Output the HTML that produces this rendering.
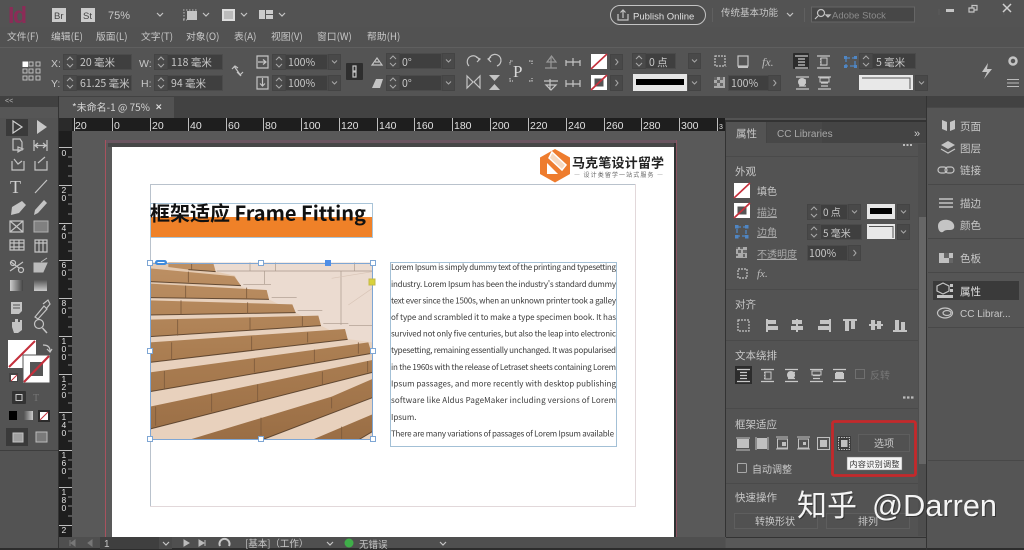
<!DOCTYPE html>
<html lang="zh"><head><meta charset="utf-8"><title>InDesign</title>
<style>
html,body{margin:0;padding:0;background:#535353;width:1024px;height:550px;overflow:hidden}
svg{display:block;position:absolute;left:0;top:0;filter:blur(.35px)}
text{font-family:"Liberation Sans","Noto Sans CJK SC",sans-serif;fill:#c8c8c8;font-size:10.5px}
.c{font-family:"Noto Sans CJK SC","Liberation Sans",sans-serif}
.m{font-family:"Noto Sans CJK SC","Liberation Sans",sans-serif;font-size:9.8px}
.l{font-family:"Noto Sans CJK SC","Liberation Sans",sans-serif;font-size:8px;fill:#3a3a3a}
.r{font-size:10.5px;fill:#e0e0e0}
.v{font-size:8.500px;fill:#e0e0e0}
.ic{fill:none;stroke:#c4c4c4;stroke-width:1.2}
.if{fill:#c4c4c4}
</style></head><body>
<svg width="1024" height="550" viewBox="0 0 1024 550" xmlns="http://www.w3.org/2000/svg">
<defs>
<g id="sp"><rect width="13" height="15" fill="#494949" stroke="#444"/><path d="M3.5 5.5 6.5 2.5 9.5 5.5M3.5 9.5 6.5 12.5 9.5 9.5" fill="none" stroke="#a8a8a8"/></g>
<g id="dd"><rect width="12" height="15" fill="#494949" stroke="#444"/><path d="M3.5 6 6 8.5 8.5 6" fill="none" stroke="#a8a8a8"/></g>
<g id="ar"><rect width="12" height="15" fill="#494949" stroke="#444"/><path d="M5 4.5 7.5 7.5 5 10.5" fill="none" stroke="#a8a8a8"/></g>
<g id="none"><rect width="16" height="15" fill="#fff"/><path d="M0 15 16 0" stroke="#c4303c" stroke-width="1.6"/></g>
<g id="nonest"><rect width="16" height="15" fill="#fff"/><rect x="3.5" y="3.5" width="9" height="8" fill="#555"/><path d="M0 15 16 0" stroke="#c4303c" stroke-width="1.8"/></g>
<g id="wrap"><path d="M0 1H13M0 13H13M3 4H10M3 7H10M3 10H10" stroke="#c8c8c8" stroke-width="1.2" fill="none"/></g>
<linearGradient id="g1" x1="0" x2="1"><stop offset="0" stop-color="#ccc"/><stop offset="1" stop-color="#444"/></linearGradient>
<linearGradient id="g2" x1="0" x2="1"><stop offset="0" stop-color="#555"/><stop offset="1" stop-color="#ccc"/></linearGradient>
<linearGradient id="g3" x1="0" x2="0" y1="0" y2="1"><stop offset="0" stop-color="#555"/><stop offset="1" stop-color="#ccc"/></linearGradient>
<linearGradient id="rs" gradientUnits="userSpaceOnUse" x1="0" x2="0" y1="22" y2="555"><stop offset="0" stop-color="#bd9064"/><stop offset=".5" stop-color="#ab7e52"/><stop offset="1" stop-color="#9a6e45"/></linearGradient>
<clipPath id="cp"><rect x="15" y="22" width="667" height="533"/></clipPath>
</defs>

<!-- base -->
<rect width="1024" height="550" fill="#535353"/>
<rect y="27" width="1024" height="20" fill="#525252"/>
<rect y="47" width="1024" height="49" fill="#545454"/>
<path d="M0 47.5H1024" stroke="#5f5f5f"/>
<rect y="96" width="1024" height="22" fill="#424242"/>
<rect x="0" y="96" width="58" height="454" fill="#535353"/>
<rect x="0" y="96" width="58" height="11" fill="#414141"/>
<rect x="0" y="107" width="58" height="11" fill="#565656"/>
<path d="M58.5 96V550" stroke="#333"/>
<text x="5" y="103" style="font-size:7px;fill:#bbb">&lt;&lt;</text>

<!-- top bar -->
<text x="8" y="23" style="font-size:23px;fill:#8b2c57;font-weight:bold" textLength="19">Id</text>
<rect x="52" y="8" width="14" height="14" fill="#cbcbcb"/><text x="54" y="19" style="font-size:9.5px;fill:#444">Br</text>
<rect x="81" y="8" width="14" height="14" fill="#cbcbcb"/><text x="83" y="19" style="font-size:9.5px;fill:#444">St</text>
<text x="108" y="19" style="font-size:11px">75%</text>
<path d="M157 13 160 16 163 13M203 13 206 16 209 13M241 13 244 16 247 13M279 13 282 16 285 13" class="ic" stroke-width="1"/>
<rect x="187" y="11" width="10" height="9" class="if"/><path d="M183 10H197M183 20H187M184 12V20" stroke="#bbb" stroke-dasharray="1.5 1.5" fill="none"/>
<rect x="223" y="10" width="11" height="10" fill="#bbb" stroke="#ddd" stroke-width="2"/>
<rect x="259" y="10" width="6" height="9" fill="#ccc"/><rect x="266" y="10" width="7" height="4" fill="#ccc"/><rect x="266" y="15" width="7" height="4" fill="#ccc"/>
<rect x="610.5" y="5.5" width="95" height="19" rx="9.5" fill="#4c4c4c" stroke="#c4c4c4"/>
<path d="M618 14V20H628V14M623 18V10M620.5 12.5 623 10 625.5 12.5" class="ic"/>
<text x="633" y="19.5" style="font-size:9.5px;fill:#e0e0e0">Publish Online</text>
<path d="M712.5 8V22" stroke="#606060"/>
<text x="721" y="16" class="c" style="font-size:9.5px">传统基本功能</text>
<path d="M787 13 790 16 793 13" class="ic" stroke-width="1.4"/>
<path d="M804.5 8V22" stroke="#606060"/>
<rect x="811.5" y="7" width="103" height="15" fill="#474747" stroke="#666"/>
<circle cx="821" cy="13" r="3.5" class="ic"/><path d="M818 16 815 19M826 15H830L828 17Z" class="ic"/>
<text x="832" y="18.5" style="font-size:9.5px;fill:#8b8b8b">Adobe Stock</text>
<path d="M939 9V15M972 3V15M1004 3V15" stroke="#5b5b5b"/>
<rect x="946" y="9" width="8" height="3" fill="#c4c4c4"/>
<path d="M969 8H974V12H969ZM972 8V5.5H977V10H974" class="ic"/>
<path d="M1003 4 1011 12M1011 4 1003 12" stroke="#cfcfcf" stroke-width="1.5"/>

<!-- menu -->
<g><text x="7" y="40" class="m">文件(F)</text><text x="51" y="40" class="m">编辑(E)</text><text x="96" y="40" class="m">版面(L)</text><text x="141" y="40" class="m">文字(T)</text><text x="186" y="40" class="m">对象(O)</text><text x="234" y="40" class="m">表(A)</text><text x="271" y="40" class="m">视图(V)</text><text x="317" y="40" class="m">窗口(W)</text><text x="367" y="40" class="m">帮助(H)</text></g>

<!-- control bar -->
<g fill="none" stroke="#bdbdbd"><rect x="23" y="62" width="4.5" height="4.5" fill="#fff" stroke="#fff"/><rect x="29" y="62" width="4" height="4"/><rect x="36" y="62" width="4" height="4"/><rect x="23" y="69" width="4" height="4"/><rect x="29" y="69" width="4" height="4"/><rect x="36" y="69" width="4" height="4"/><rect x="23" y="76" width="4" height="4"/><rect x="29" y="76" width="4" height="4"/><rect x="36" y="76" width="4" height="4"/></g>
<g style="font-size:10.5px"><text x="51" y="67">X:</text><text x="51" y="87">Y:</text><text x="139" y="67">W:</text><text x="141" y="87">H:</text></g>
<g fill="#3f3f3f" stroke="#4b4b4b">
<rect x="76.500" y="54.500" width="55" height="15"/><rect x="76.500" y="75.500" width="55" height="15"/>
<rect x="167.500" y="54.500" width="55" height="15"/><rect x="167.500" y="75.500" width="55" height="15"/>
<rect x="285.500" y="54.500" width="42" height="15"/><rect x="285.500" y="75.500" width="42" height="15"/>
<rect x="399.500" y="53.500" width="42" height="15"/><rect x="399.500" y="75.500" width="42" height="15"/>
<rect x="645.500" y="53.500" width="30" height="15"/>
<rect x="728.500" y="75.500" width="40" height="15"/>
<rect x="872.500" y="53.500" width="43" height="15"/>
</g>
<use href="#sp" x="63.500" y="54.500"/><use href="#sp" x="63.500" y="75.500"/><use href="#sp" x="154.500" y="54.500"/><use href="#sp" x="154.500" y="75.500"/>
<use href="#sp" x="272.500" y="54.500"/><use href="#sp" x="272.500" y="75.500"/><use href="#dd" x="328.500" y="54.500"/><use href="#dd" x="328.500" y="75.500"/>
<use href="#sp" x="386.500" y="53.500"/><use href="#sp" x="386.500" y="75.500"/><use href="#dd" x="442.500" y="53.500"/><use href="#dd" x="442.500" y="75.500"/>
<use href="#sp" x="632.500" y="53.500"/><use href="#dd" x="688.500" y="53.500"/>
<use href="#ar" x="768.500" y="75.500"/>
<use href="#sp" x="859.500" y="53.500"/><use href="#dd" x="915.500" y="75.500"/>
<g>
<text x="80" y="66" class="c">20 毫米</text><text x="80" y="87" class="c">61.25 毫米</text><text x="171" y="66" class="c">118 毫米</text><text x="171" y="87" class="c">94 毫米</text>
<text x="288" y="66" class="c">100%</text><text x="288" y="87" class="c">100%</text><text x="402" y="66" class="c">0°</text><text x="402" y="87" class="c">0°</text>
<text x="649" y="66" class="c">0 点</text><text x="731" y="87" class="c">100%</text><text x="876" y="66" class="c">5 毫米</text></g>
<path d="M234 66 241 76M232 69 235 66 238 68M237 72 240 75 243 72" class="ic" stroke-width="1.5"/>
<path d="M257 56H268V68H257ZM258 62H266M263 59.500 266 62 263 64.500" class="ic"/>
<path d="M257 77H268V89H257ZM262.500 78V86M260 83.500 262.500 86 265 83.500" class="ic"/>
<rect x="346" y="63" width="17" height="17" fill="#2e2e2e" rx="1"/>
<path d="M353 66H356V71H353ZM353 72H356V77H353Z" class="ic"/>
<path d="M372 65H382L377 58ZM375 62H379" class="ic"/><path d="M372 88H380L383 79H376Z" class="if"/>
<path d="M469 66A6 6 0 1 1 479 60M476 57 480 59 477 62M497 66A6 6 0 1 0 489 60M491 57 488 59 491 62" class="ic"/>
<path d="M467 76V88L473 82ZM480 76V88L474 82Z" class="ic"/><path d="M489 75 500 75 494.500 81ZM489 90H500L494.500 84Z" class="if"/>
<text x="513" y="77" style="font-family:'Liberation Serif',serif;font-size:17px;fill:#d8d8d8">P</text>
<path d="M510 61H513M510 62V65M529 61H532V64M510 78V81H513M529 81H532V78" class="ic" stroke-dasharray="1.5 1"/>
<path d="M551 57V68M547 62H556L551.500 56ZM545 68H557" class="ic" opacity=".6"/>
<path d="M566 62H580M566 60V66M573 58V66M580 60V66" class="ic"/>
<path d="M550 79V90M544 81H558M546 85H556L551 90Z" class="ic"/><path d="M566 84H580M566 80V87M573 80V87M580 80V87" class="ic"/>
<use href="#none" x="591" y="54"/><use href="#nonest" x="591" y="75"/>
<use href="#ar" x="610.500" y="54.500"/><use href="#ar" x="610.500" y="75.500"/>
<rect x="633" y="74" width="54" height="17" fill="#e6e6e6"/><rect x="636" y="79" width="48" height="6" fill="#000"/>
<use href="#dd" x="688.500" y="75.500"/>
<rect x="715" y="56" width="10" height="10" class="ic" stroke-dasharray="2 1"/><text x="725" y="67" style="font-size:7px">.</text>
<rect x="738" y="56" width="10" height="10" class="ic"/><rect x="738" y="66" width="10" height="2" class="if"/>
<text x="762" y="66" style="font-family:'Liberation Serif',serif;font-style:italic;font-size:12px;fill:#bbb">fx.</text>
<rect x="714" y="77" width="11" height="11" fill="#aaa"/><path d="M714 77H717V80H714ZM720 77H723V80H720ZM717 80H720V83H717ZM714 83H717V86H714ZM720 83H723V86H720Z" fill="#666"/>
<rect x="793" y="53" width="16" height="16" fill="#2c2c2c" rx="1"/><use href="#wrap" x="795" y="55"/>
<use href="#wrap" x="817" y="55"/><rect x="821" y="58" width="6" height="7" fill="#555" stroke="#c8c8c8"/>
<use href="#wrap" x="796" y="76"/><circle cx="802" cy="82" r="4" fill="#c8c8c8"/>
<use href="#wrap" x="818" y="76"/><rect x="820" y="78" width="9" height="4" fill="#555" stroke="#c8c8c8"/>
<path d="M846 58H855V66H846Z" fill="none" stroke="#4f86c4" stroke-width="1.3" stroke-dasharray="4 2"/><g fill="#4f86c4"><rect x="844" y="56" width="3" height="3"/><rect x="854" y="56" width="3" height="3"/><rect x="844" y="65" width="3" height="3"/><rect x="854" y="65" width="3" height="3"/></g>
<rect x="859" y="75" width="54" height="15" fill="#e8e8e8"/><path d="M862 78H910V89" stroke="#555" fill="none"/>
<path d="M988 63 982 72H987L984 79 992 69H987Z" class="if"/>
<circle cx="1013" cy="61" r="3.500" fill="none" stroke="#c4c4c4" stroke-width="2.500"/>
<path d="M1007 79.500H1019M1007 83H1019M1007 86.500H1019" stroke="#bbb"/>

<!-- tab -->
<rect x="59" y="97" width="115" height="21" fill="#525252"/>
<text x="72" y="111" class="c" style="font-size:10px;fill:#d6d6d6">*未命名-1 @ 75%</text>
<path d="M156.500 104.500 161 109M161 104.500 156.500 109" stroke="#ddd" stroke-width="1.2"/>
<text x="1014" y="103" style="font-size:7px;fill:#bbb">&lt;&lt;</text>

<!-- pasteboard -->
<rect x="59" y="118" width="666" height="420" fill="#595959"/>
<rect x="105" y="140" width="572" height="3" fill="#6a5560"/>
<rect x="108" y="143" width="566" height="4" fill="#474747"/>
<path d="M105.500 140V537" stroke="#a8525e"/>
<rect x="112" y="147" width="562" height="391" fill="#fff"/>
<rect x="674" y="143" width="2" height="395" fill="#2e3232"/>
<path d="M676.500 140V537" stroke="#8a5360"/>

<!-- top ruler -->
<rect x="59" y="118" width="666" height="13" fill="#1e1e1e"/>
<rect x="59" y="118" width="13" height="13" fill="#2a2a2a"/>
<path stroke="#bdbdbd" fill="none" d="M74.500 118V131M112.500 118V131M150.500 118V131M188.500 118V131M226.500 118V131M263.500 118V131M301.500 118V131M339.500 118V131M377.500 118V131M414.500 118V131M452.500 118V131M490.500 118V131M528.500 118V131M566.500 118V131M604.500 118V131M641.500 118V131M679.500 118V131M717.500 118V131"/>
<g><text x="75" y="129" class="r">20</text><text x="114" y="129" class="r">0</text><text x="152" y="129" class="r">20</text><text x="190" y="129" class="r">40</text><text x="228" y="129" class="r">60</text><text x="265" y="129" class="r">80</text><text x="303" y="129" class="r">100</text><text x="341" y="129" class="r">120</text><text x="379" y="129" class="r">140</text><text x="416" y="129" class="r">160</text><text x="454" y="129" class="r">180</text><text x="492" y="129" class="r">200</text><text x="530" y="129" class="r">220</text><text x="568" y="129" class="r">240</text><text x="606" y="129" class="r">260</text><text x="643" y="129" class="r">280</text><text x="681" y="129" class="r">300</text><text x="719" y="129" class="r" style="font-size:7px">3</text></g>
<!-- left ruler -->
<rect x="59" y="131" width="13" height="407" fill="#1e1e1e"/>
<path stroke="#bdbdbd" fill="none" d="M59 147.500H72M59 185.500H72M59 223.500H72M59 260.500H72M59 298.500H72M59 336.500H72M59 374.500H72M59 412.500H72M59 450.500H72M59 487.500H72M59 525.500H72"/>
<path stroke="#8a8a8a" fill="none" d="M68 157H72M68 166H72M68 176H72M68 195H72M68 204H72M68 214H72M68 233H72M68 242H72M68 251H72M68 270H72M68 279H72M68 289H72M68 308H72M68 317H72M68 327H72M68 346H72M68 355H72M68 365H72M68 384H72M68 393H72M68 403H72M68 422H72M68 431H72M68 441H72M68 460H72M68 469H72M68 478H72M68 497H72M68 506H72M68 516H72"/>
<g>
<text x="61.500" y="156" class="v">0</text>
<text x="61.500" y="193" class="v">2</text><text x="61.500" y="201" class="v">0</text>
<text x="61.500" y="231" class="v">4</text><text x="61.500" y="239" class="v">0</text>
<text x="61.500" y="268" class="v">6</text><text x="61.500" y="276" class="v">0</text>
<text x="61.500" y="306" class="v">8</text><text x="61.500" y="314" class="v">0</text>
<text x="61.500" y="344" class="v">1</text><text x="61.500" y="352" class="v">0</text><text x="61.500" y="360" class="v">0</text>
<text x="61.500" y="382" class="v">1</text><text x="61.500" y="390" class="v">2</text><text x="61.500" y="398" class="v">0</text>
<text x="61.500" y="420" class="v">1</text><text x="61.500" y="428" class="v">4</text><text x="61.500" y="436" class="v">0</text>
<text x="61.500" y="458" class="v">1</text><text x="61.500" y="466" class="v">6</text><text x="61.500" y="474" class="v">0</text>
<text x="61.500" y="495" class="v">1</text><text x="61.500" y="503" class="v">8</text><text x="61.500" y="511" class="v">0</text>
<text x="61.500" y="533" class="v">2</text></g>

<!-- page content -->
<path d="M150.500 506V184.500H635" fill="none" stroke="#b9c2cc"/><path d="M635.500 184V506.500H150" fill="none" stroke="#e2d8da"/>
<rect x="150" y="217" width="223" height="20.500" fill="#ef8128"/>
<rect x="150.500" y="203.500" width="222" height="34" fill="none" stroke="#a9c4d8"/>
<text x="150" y="220.500" class="c" style="font-size:20px;font-weight:700;fill:#111;font-family:'Noto Sans CJK SC',sans-serif" textLength="216" lengthAdjust="spacing">框架适应 Frame Fitting</text>

<!-- stairs -->
<g transform="translate(145,255) scale(.33333)"><g clip-path="url(#cp)">
<rect x="15" y="22" width="667" height="533" fill="#e8d1bd"/>
<path d="M205 22H682V262L608 252 528 212 452 173 372 133 285 92 212 50Z" fill="#ebdbd0"/>
<path d="M15 22H205L212 50 270 62 285 92H15Z" fill="#e4cab2"/>
<path d="M215 48H682M295 88H378M380 127H455M458 166H532M535 206H610M612 212H682M315 22V48M392 22V48M628 22V48M588 48V210M358 48V88" stroke="#a8978a" stroke-width="2" fill="none"/>
<path d="M560 70 682 50M610 150 682 100" stroke="#d8c4b6" stroke-width="2" fill="none"/>
<g fill="url(#rs)">
<path d="M70 22 205 25 212 50 130 44 70 36Z"/>
<path d="M15 40 268 64 288 92 15 80Z"/>
<path d="M15 86 365 105 372 133 15 128Z"/>
<path d="M15 136 442 148 452 173 15 180Z"/>
<path d="M15 194 520 182 528 212 15 245Z"/>
<path d="M15 262 600 222 608 253 15 322Z"/>
<path d="M15 352 670 262 680 295 15 410Z"/>
<path d="M15 455 682 315 682 352 15 522Z"/>
<path d="M130 555 345 490 560 425 682 372V428L350 555Z"/>
<path d="M500 555 682 478V530L640 555Z"/>
</g>
<g stroke="#48321f" stroke-width="3" fill="none" opacity=".8">
<path d="M130 44 212 50M15 80 288 92M15 128 372 133M15 180 452 173M15 245 528 212M15 322 608 253M15 410 680 295M15 522 682 352M350 555 682 428M640 555 682 530"/>
</g>
<g stroke="#7c5a3c" stroke-width="2.500" fill="none">
<path d="M140 24V44M130 50V82M122 92V128M108 136V178M305 98V132M308 142V176M98 194V242M315 188V225M472 184V216M80 262V315M320 244V285M488 232V262M58 348V404M328 312V352M508 284V320M640 262V296M32 455V512M200 416V470M338 388V438M532 350V388M668 318V352M348 488V540M590 515V555M560 428V460"/>
</g>
</g></g>
<rect x="150.500" y="263.500" width="222" height="176" fill="none" stroke="#7ea6d4"/>
<g fill="#fff" stroke="#7ea6d4"><rect x="147.500" y="260.500" width="5" height="5"/><rect x="258.500" y="260.500" width="5" height="5"/><rect x="370.500" y="260.500" width="5" height="5"/><rect x="147.500" y="348.500" width="5" height="5"/><rect x="370.500" y="348.500" width="5" height="5"/><rect x="147.500" y="436.500" width="5" height="5"/><rect x="258.500" y="436.500" width="5" height="5"/><rect x="370.500" y="436.500" width="5" height="5"/></g>
<rect x="325" y="260" width="6" height="6" fill="#4f8ee6"/>
<rect x="369" y="279" width="6" height="6" fill="#d8d23c" stroke="#c4b848"/>
<rect x="155" y="260" width="12" height="5" rx="2.500" fill="#3f8bdc"/><path d="M157.500 262.500H164.500" stroke="#fff"/>

<!-- lorem -->
<rect x="390.500" y="262.500" width="226" height="184" fill="#fff" stroke="#a3c0d6"/>
<g>
<text x="391" y="270" class="l" textLength="225" lengthAdjust="spacing">Lorem Ipsum is simply dummy text of the printing and typesetting</text>
<text x="391" y="287" class="l" textLength="225" lengthAdjust="spacing">industry. Lorem Ipsum has been the industry's standard dummy</text>
<text x="391" y="303.500" class="l" textLength="225" lengthAdjust="spacing">text ever since the 1500s, when an unknown printer took a galley</text>
<text x="391" y="320" class="l" textLength="225" lengthAdjust="spacing">of type and scrambled it to make a type specimen book. It has</text>
<text x="391" y="336.500" class="l" textLength="225" lengthAdjust="spacing">survived not only five centuries, but also the leap into electronic</text>
<text x="391" y="353" class="l" textLength="225" lengthAdjust="spacing">typesetting, remaining essentially unchanged. It was popularised</text>
<text x="391" y="370" class="l" textLength="225" lengthAdjust="spacing">in the 1960s with the release of Letraset sheets containing Lorem</text>
<text x="391" y="386.500" class="l" textLength="225" lengthAdjust="spacing">Ipsum passages, and more recently with desktop publishing</text>
<text x="391" y="403" class="l" textLength="225" lengthAdjust="spacing">software like Aldus PageMaker including versions of Lorem</text>
<text x="391" y="420" class="l">Ipsum.</text>
<text x="391" y="436.500" class="l" textLength="223" lengthAdjust="spacing">There are many variations of passages of Lorem Ipsum available</text>
</g>

<!-- logo -->
<path d="M555 149 570 157.500V174L555 182.500 540 174V157.500Z" fill="#ee7c2e"/>
<path d="M552 152 566 165 562 170 549 158Z" fill="#f7d9c0" stroke="#fff" stroke-width="1.500"/><path d="M547 163 558 174H547Z" fill="#fff"/>
<text x="572" y="167.500" class="c" style="font-size:13px;font-weight:700;fill:#222" textLength="92" lengthAdjust="spacing">马克笔设计留学</text>
<text x="574" y="177" class="c" style="font-size:6px;fill:#666" textLength="89" lengthAdjust="spacing">— 设计类留学一站式服务 —</text>

<!-- status -->
<rect x="59" y="537" width="666" height="13" fill="#4f4f4f"/>
<rect x="0" y="548" width="1024" height="2" fill="#2c2c2c"/>
<rect x="100" y="537" width="59" height="12" fill="#3f3f3f"/><rect x="159" y="537" width="13" height="12" fill="#4a4a4a"/>
<text x="104" y="547" style="font-size:10px">1</text>
<path d="M163 542 166 545 169 542M327 542 330 545 333 542M440 542 443 545 446 542" class="ic" stroke-width="1"/>
<path d="M75 540V546L71 543ZM70 540V546M92 540V546L88 543Z" fill="#777" stroke="#777"/>
<path d="M184 540V546L189 543ZM199 540V546L204 543ZM205 540V546" fill="#bbb" stroke="#bbb"/>
<path d="M220 546A5 5 0 1 1 229 546" fill="none" stroke="#c8c8c8" stroke-width="2"/>
<text x="245" y="547" class="c" style="font-size:9.500px">[基本]（工作）</text>
<circle cx="349" cy="543" r="4.500" fill="#3fae49"/>
<text x="359" y="548" class="c" style="font-size:9.500px">无错误</text>

<!-- tools -->
<rect x="6" y="119" width="22" height="17" fill="#3a3a3a"/>
<path d="M13 121V133L22 127Z" fill="none" stroke="#cfcfcf" stroke-width="1.200"/>
<path d="M37 120V134L47 127Z" fill="#c8c8c8"/>
<path d="M13 139H20L22 142V150H13ZM18 147V152L23 149Z" class="ic"/>
<path d="M34 140V151M47 140V151M35 145.500H46M38 143 35 145.500 38 148M43 143 46 145.500 43 148" class="ic"/>
<path d="M12 161V170H24V161M14 159 18 164 22 161" class="ic" stroke-width="1.800"/>
<path d="M35 161V170H47V161M38 163 45 157" class="ic" stroke-width="1.800"/>
<text x="10" y="193" style="font-family:'Liberation Serif',serif;font-size:18px;fill:#d0d0d0">T</text>
<path d="M35 193 47 180" stroke="#c4c4c4" stroke-width="1.200"/>
<path d="M22 201 26 205 19 213 11 215 12 207Z" class="if"/>
<path d="M44 200 47 203 38 213 34 215 35 210Z" class="if"/>
<path d="M10 221H23V232H10ZM10 221 23 232M23 221 10 232" class="ic"/>
<rect x="34" y="221" width="14" height="11" fill="#808080" stroke="#b0b0b0"/>
<path d="M10 240H24V250H10ZM10 243H24M10 247H24M14 240V250M19 240V250" class="ic"/>
<path d="M35 240H47V252H35ZM35 243H47M39 240V252M43 240V252" class="ic"/>
<circle cx="13" cy="263" r="2.500" class="ic"/><circle cx="21" cy="270" r="2.500" class="ic"/><path d="M10 271 23 262M11 262 19 268" class="ic"/>
<path d="M34 263H47L43 272H34ZM41 262 47 258" fill="#bbb" stroke="#bbb"/>
<rect x="10" y="280" width="13" height="11" fill="url(#g1)"/>
<rect x="34" y="280" width="13" height="11" fill="url(#g3)"/>
<path d="M11 302H22V311L19 314H11Z" class="if"/><path d="M13 305H20M13 308H20" stroke="#555"/>
<path d="M35 317 44 306 47 309 38 319ZM43 304 48 300 50 304 46 309" class="ic" stroke-width="1.400"/>
<path d="M12 327V322L15 322V319H18V322H20V320H22V330L18 333H14Z" class="if"/>
<circle cx="39" cy="324" r="4.500" class="ic"/><path d="M42.500 328 47 333" stroke="#c4c4c4" stroke-width="1.500"/>

<rect x="8" y="340" width="28" height="28" fill="#fff"/><path d="M9 367 35 341" stroke="#c4303c" stroke-width="2"/>
<path d="M43 345C48 345 50 347 50 351M47 349 50 352 52 349" class="ic"/>
<rect x="23" y="355" width="27" height="28" fill="#fff" stroke="#555"/><rect x="30" y="362" width="13" height="14" fill="#555"/><path d="M24 382 49 356" stroke="#c4303c" stroke-width="2.200"/>
<rect x="9" y="373" width="9" height="9" fill="#444"/><rect x="11" y="375" width="6" height="6" fill="#fff"/><path d="M11 381 17 375" stroke="#c4303c"/>
<rect x="12" y="391" width="14" height="13" fill="#333" rx="1"/><rect x="16" y="394.500" width="6" height="6" fill="none" stroke="#ccc"/>
<text x="33" y="401" style="font-family:'Liberation Serif',serif;font-size:10px;fill:#777">T</text>
<rect x="9" y="411" width="8" height="9" fill="#000"/>
<rect x="24" y="411" width="9" height="9" fill="url(#g2)"/>
<rect x="38" y="410" width="12" height="12" fill="#2b2b2b"/><rect x="40" y="412" width="8" height="8" fill="#fff"/><path d="M40 420 48 412" stroke="#c4303c"/>
<rect x="6" y="428" width="22" height="18" fill="#3a3a3a"/>
<rect x="13" y="433" width="10" height="9" fill="#a0a0a0" stroke="#c4c4c4"/>
<rect x="36" y="432" width="11" height="10" fill="#7a7a7a" stroke="#bbb"/>
<path d="M0 450.500H58" stroke="#3e3e3e"/>

<!-- panel -->
<rect x="725" y="120" width="201" height="417" fill="#535353"/>
<rect x="725" y="120" width="201" height="2" fill="#333"/>
<rect x="726" y="122" width="200" height="21" fill="#444"/>
<rect x="726" y="122" width="40" height="22" fill="#535353"/>
<rect x="767" y="122" width="55" height="21" fill="#484848"/>
<text x="736" y="137" class="c" style="font-size:10.500px">属性</text>
<text x="777" y="137" style="font-size:10px;fill:#a8a8a8">CC Libraries</text>
<text x="914" y="137" style="font-size:11px;fill:#ccc">»</text>
<path d="M903 145H913" stroke="#bbb" stroke-width="2" stroke-dasharray="2 1.500"/>
<rect x="918" y="144" width="8" height="392" fill="#4e4e4e"/>
<rect x="919" y="217" width="7" height="247" fill="#666"/>
<path d="M725.500 120V537M926.500 96V550" stroke="#333"/>
<path d="M726 537.500H926" stroke="#333"/>
<rect x="726" y="538" width="200" height="10" fill="#585858"/>
<path d="M726 156.500H918M726 289.500H918M726 340.500H918M726 408.500H918M726 483.500H918" stroke="#4a4a4a"/>
<text x="735" y="175" class="c" style="font-size:10.500px">外观</text>
<use href="#none" x="734" y="183"/><text x="757" y="195" class="c" style="font-size:10px">填色</text>
<use href="#nonest" x="734" y="203"/><text x="757" y="216" class="c" style="font-size:10px;text-decoration:underline;fill:#aaa">描边</text>
<use href="#sp" x="807.500" y="204.500"/><rect x="820.500" y="204.500" width="27" height="15" fill="#3f3f3f" stroke="#4b4b4b"/><text x="823" y="216" class="c" style="font-size:10px">0 点</text><use href="#dd" x="848.500" y="204.500"/>
<rect x="867" y="204" width="28" height="15" fill="#e6e6e6"/><rect x="870" y="208" width="22" height="6" fill="#000"/><use href="#dd" x="897.500" y="204.500"/>
<path d="M737 227H746V236H737Z" fill="none" stroke="#4f86c4" stroke-dasharray="4 2" stroke-width="1.300"/><g fill="#4f86c4"><rect x="735" y="225" width="3.500" height="3.500"/><rect x="745" y="225" width="3.500" height="3.500"/><rect x="735" y="235" width="3.500" height="3.500"/><rect x="745" y="235" width="3.500" height="3.500"/></g>
<text x="757" y="236" class="c" style="font-size:10px;text-decoration:underline;fill:#aaa">边角</text>
<use href="#sp" x="807.500" y="224.500"/><rect x="820.500" y="224.500" width="41" height="15" fill="#3f3f3f" stroke="#4b4b4b"/><text x="823" y="237" class="c" style="font-size:10px">5 毫米</text>
<rect x="867" y="224" width="28" height="15" fill="#e8e8e8"/><path d="M869 226.500H893V238" stroke="#555" fill="none"/><use href="#dd" x="897.500" y="224.500"/>
<rect x="736" y="247" width="11" height="11" fill="#aaa"/><path d="M736 247H738V249H736ZM740 247H743V249H740ZM738 250H741V253H738ZM736 254H738V256H736ZM743 250H747V253H743ZM743 254H745V257H743Z" fill="#666"/>
<text x="757" y="258" class="c" style="font-size:10px;text-decoration:underline;fill:#aaa">不透明度</text>
<rect x="807.500" y="245.500" width="40" height="15" fill="#3f3f3f" stroke="#4b4b4b"/><text x="809" y="257" class="c" style="font-size:10.500px">100%</text><use href="#ar" x="848.500" y="245.500"/>
<rect x="738" y="269" width="9" height="9" class="ic" stroke-dasharray="2 1"/>
<text x="757" y="277" style="font-family:'Liberation Serif',serif;font-style:italic;font-size:11px;fill:#bbb">fx.</text>

<text x="735" y="308" class="c" style="font-size:10.500px">对齐</text>
<rect x="738" y="320" width="11" height="11" class="ic" stroke-dasharray="2 1"/>
<g class="if"><rect x="766" y="319" width="2" height="13"/><rect x="768" y="320" width="8" height="4"/><rect x="768" y="326" width="10" height="4"/>
<rect x="796" y="319" width="2" height="13"/><rect x="792" y="320" width="10" height="4"/><rect x="791" y="326" width="12" height="4"/>
<rect x="829" y="319" width="2" height="13"/><rect x="820" y="320" width="9" height="4"/><rect x="818" y="326" width="11" height="4"/>
<rect x="843" y="319" width="14" height="2"/><rect x="845" y="321" width="4" height="10"/><rect x="851" y="321" width="4" height="8"/>
<rect x="869" y="324" width="14" height="2"/><rect x="871" y="320" width="4" height="10"/><rect x="877" y="321" width="4" height="8"/>
<rect x="893" y="330" width="14" height="2"/><rect x="895" y="320" width="4" height="10"/><rect x="901" y="322" width="4" height="8"/></g>

<text x="735" y="359" class="c" style="font-size:10.500px">文本绕排</text>
<rect x="735" y="366" width="17" height="18" fill="#2c2c2c"/><use href="#wrap" x="737" y="368.500"/>
<use href="#wrap" x="761" y="368.500"/><rect x="765" y="372" width="6" height="7" fill="#555" stroke="#c8c8c8"/>
<use href="#wrap" x="785" y="368.500"/><circle cx="791" cy="375" r="4" fill="#c8c8c8"/>
<use href="#wrap" x="810" y="368.500"/><rect x="812" y="371" width="9" height="4" fill="#555" stroke="#c8c8c8"/>
<use href="#wrap" x="833" y="368.500"/><rect x="835" y="373" width="9" height="6" fill="#c8c8c8"/>
<rect x="855.500" y="369.500" width="9" height="9" fill="none" stroke="#707070"/><text x="870" y="379" class="c" style="font-size:10px;fill:#777">反转</text>
<path d="M903 397.500H914" stroke="#bbb" stroke-width="2.200" stroke-dasharray="2.500 1.500"/>

<text x="735" y="428" class="c" style="font-size:10.500px">框架适应</text>
<g fill="#c0c0c0" stroke="#c0c0c0"><rect x="737.500" y="439.500" width="11" height="8"/><rect x="757.500" y="438.500" width="9" height="10"/></g>
<path d="M736 438H750M736 450H750M756 437V450M768 437V450" stroke="#c0c0c0" fill="none"/>
<rect x="777.500" y="439" width="10" height="9" fill="none" stroke="#c0c0c0"/><rect x="782" y="442" width="4" height="4" fill="#c0c0c0"/><path d="M776 437H788M776 449H788" stroke="#c0c0c0"/>
<rect x="798.500" y="439" width="10" height="9" fill="none" stroke="#c0c0c0"/><rect x="803" y="442" width="3" height="3" fill="#c0c0c0"/><path d="M797 437H810M797 449H810" stroke="#c0c0c0"/>
<rect x="817.500" y="437.500" width="12" height="12" fill="none" stroke="#c0c0c0"/><rect x="820" y="440" width="7" height="7" fill="#c0c0c0"/>
<rect x="837" y="436" width="14" height="15" fill="#3c3c3c"/><rect x="838.500" y="437.500" width="11" height="12" fill="none" stroke="#c0c0c0" stroke-dasharray="1.500 1"/><rect x="841" y="440" width="6.500" height="7" fill="#c0c0c0"/>
<rect x="858.500" y="434.500" width="51" height="17" fill="#515151" stroke="#5e5e5e"/>
<text x="884" y="447" class="c" text-anchor="middle" style="font-size:10px">选项</text>
<rect x="847" y="457" width="55" height="13" fill="#f4f4f4" stroke="#777" stroke-width=".5"/>
<text x="849.500" y="467" class="c" style="font-size:8px;fill:#333" textLength="50" lengthAdjust="spacing">内容识别调整</text>
<rect x="832.500" y="421.500" width="83" height="54" rx="2" fill="none" stroke="#c4292b" stroke-width="2.800"/>
<rect x="737.500" y="463.500" width="9" height="9" rx="1" fill="none" stroke="#a8a8a8"/>
<text x="752" y="473" class="c" style="font-size:10px">自动调整</text>
<text x="735" y="501" class="c" style="font-size:10.500px">快速操作</text>
<rect x="734.500" y="513.500" width="83" height="15" fill="#515151" stroke="#5e5e5e"/><rect x="826.500" y="513.500" width="83" height="15" fill="#515151" stroke="#5e5e5e"/>
<text x="775" y="525" class="c" text-anchor="middle" style="font-size:10px">转换形状</text>
<text x="868" y="525" class="c" text-anchor="middle" style="font-size:10px">排列</text>

<!-- dock -->
<rect x="927" y="96" width="97" height="452" fill="#555"/>
<rect x="927" y="96" width="97" height="11" fill="#424242"/>
<path d="M927 107.500H1024M928 184.500H1024M928 238.500H1024M928 272.500H1024M928 327.500H1024M928 460.500H1024" stroke="#484848"/>
<path d="M942 120 947 122V131L942 129ZM955 120 950 122V131L955 129Z" class="if"/><text x="960" y="130" class="c" style="font-size:10.500px">页面</text>
<path d="M948 141 955 145 948 149 941 145Z" class="if"/><path d="M941 149 948 153 955 149" class="ic" stroke-width="2"/><text x="960" y="152" class="c" style="font-size:10.500px">图层</text>
<rect x="938" y="167" width="9" height="6" rx="3" class="ic" stroke-width="1.500"/><rect x="945" y="167" width="9" height="6" rx="3" class="ic" stroke-width="1.500"/><text x="960" y="174" class="c" style="font-size:10.500px">链接</text>
<path d="M939 199H953M939 203H953M939 207H953" stroke="#c4c4c4" stroke-width="1.500"/><text x="960" y="207" class="c" style="font-size:10.500px">描边</text>
<path d="M938 226C938 221 943 219 948 220 953 221 955 225 954 228 952 232 946 228 943 232 940 233 938 230 938 226Z" class="if"/><text x="960" y="229" class="c" style="font-size:10.500px">颜色</text>
<rect x="939" y="253" width="14" height="10" fill="#c0c0c0"/><path d="M944 253H949V258H944ZM949 258H953V263H949Z" fill="#666"/><text x="960" y="262" class="c" style="font-size:10.500px">色板</text>
<rect x="933" y="281" width="86" height="19" fill="#3a3a3a"/>
<path d="M943 283 949 286V291L943 294 937 291V286Z" class="ic"/><rect x="950" y="284" width="3" height="3" class="if"/><rect x="950" y="289" width="3" height="3" class="if"/><rect x="937" y="295" width="16" height="3" class="if"/>
<text x="960" y="295" class="c" style="font-size:10.500px;fill:#e0e0e0">属性</text>
<ellipse cx="945" cy="313" rx="7.500" ry="5" class="ic"/><ellipse cx="947" cy="313" rx="4" ry="2.500" class="ic"/>
<text x="960" y="317" style="font-size:10px">CC Librar...</text>

<!-- watermark -->
<text x="798" y="517" class="c" style="font-size:30px;fill:#000;opacity:.35">知乎</text>
<text x="797" y="516" class="c" style="font-size:30px;fill:#f4f4f4">知乎</text>
<text x="873" y="517" style="font-size:31px;fill:#000;opacity:.35" textLength="125" lengthAdjust="spacingAndGlyphs">@Darren</text>
<text x="872" y="516" style="font-size:31px;fill:#f4f4f4" textLength="125" lengthAdjust="spacingAndGlyphs">@Darren</text>
</svg>
</body></html>
